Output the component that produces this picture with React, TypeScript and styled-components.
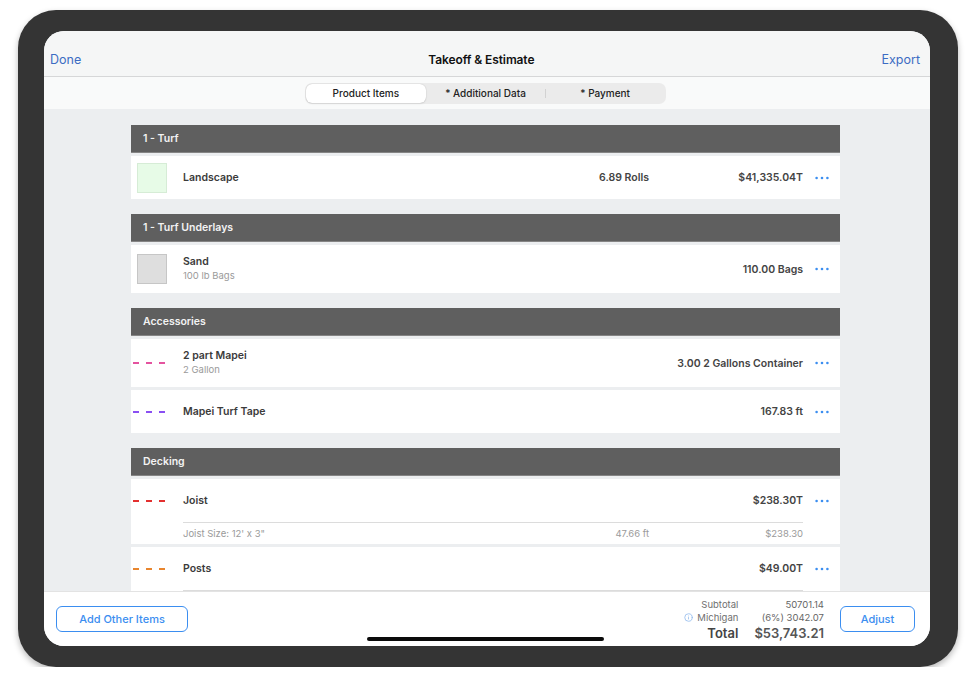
import React from 'react';
import styled, { createGlobalStyle } from 'styled-components';
import { Info } from 'lucide-react';

const GlobalStyle = createGlobalStyle`
  html, body {
    margin: 0;
    padding: 0;
    background: #ffffff;
    font-family: Inter, "Noto Sans", Roboto, sans-serif;
    -webkit-font-smoothing: antialiased;
  }
  * { box-sizing: border-box; }
`;

type Detail = { label: string; qty: string; price: string };
type Item = {
  name: string;
  sub?: string;
  swatch?: 'green' | 'gray';
  dash?: string;
  qty?: string;
  price: string;
  detail?: Detail;
};
type Section = { title: string; items: Item[] };

const sections: Section[] = [
  {
    title: '1 - Turf',
    items: [{ name: 'Landscape', swatch: 'green', qty: '6.89 Rolls', price: '$41,335.04T' }],
  },
  {
    title: '1 - Turf Underlays',
    items: [{ name: 'Sand', sub: '100 lb Bags', swatch: 'gray', price: '110.00 Bags' }],
  },
  {
    title: 'Accessories',
    items: [
      { name: '2 part Mapei', sub: '2 Gallon', dash: '#e4539f', price: '3.00 2 Gallons Container' },
      { name: 'Mapei Turf Tape', dash: '#8a4ff2', price: '167.83 ft' },
    ],
  },
  {
    title: 'Decking',
    items: [
      {
        name: 'Joist',
        dash: '#e3302f',
        price: '$238.30T',
        detail: { label: 'Joist Size: 12\' x 3"', qty: '47.66 ft', price: '$238.30' },
      },
      {
        // the size line of this row sits under the bottom bar
        name: 'Posts',
        dash: '#e8852e',
        price: '$49.00T',
        detail: { label: '', qty: '', price: '' },
      },
    ],
  },
];

const Page = styled.div`
  padding: 10px 0 0 18px;
`;

const Device = styled.div`
  width: 940px;
  height: 657px;
  padding: 21px 28px 21px 26px;
  background: #343434;
  border-radius: 38px;
  box-shadow: 0 3px 6px rgba(0, 0, 0, 0.28);
`;

const Screen = styled.div`
  position: relative;
  width: 886px;
  height: 615px;
  border-radius: 20px;
  overflow: hidden;
  display: flex;
  flex-direction: column;
  background: #eceef0;
`;

const NavBar = styled.div`
  height: 46px;
  flex-shrink: 0;
  display: flex;
  align-items: center;
  justify-content: space-between;
  padding: 11px 10px 0 6px;
  background: #f5f6f6;
  border-bottom: 1px solid #d6d7d8;
`;

const NavButton = styled.span`
  font-size: 12.5px;
  color: #3c6cc3;
`;

const Title = styled.span`
  font-size: 12px;
  font-weight: 600;
  color: #111;
  letter-spacing: -0.1px;
`;

const SegmentBar = styled.div`
  height: 32px;
  flex-shrink: 0;
  display: flex;
  align-items: center;
  justify-content: center;
  padding-right: 3px;
  background: #f9fafa;
`;

const Segmented = styled.div`
  width: 361px;
  height: 21px;
  padding: 1px;
  display: grid;
  grid-template-columns: repeat(3, 1fr);
  background: #ebebeb;
  border-radius: 7px;
`;

const Segment = styled.div<{ $active?: boolean; $divider?: boolean }>`
  position: relative;
  display: flex;
  align-items: center;
  justify-content: center;
  font-size: 10px;
  font-weight: 500;
  color: #222;
  border-radius: 6px;
  background: ${(p) => (p.$active ? '#ffffff' : 'transparent')};
  box-shadow: ${(p) => (p.$active ? '0 0 1px rgba(0,0,0,0.25), 0 1px 2px rgba(0,0,0,0.08)' : 'none')};
  &::before {
    content: '';
    display: ${(p) => (p.$divider ? 'block' : 'none')};
    position: absolute;
    left: 0;
    top: 5px;
    bottom: 5px;
    width: 1px;
    background: #d2d2d2;
  }
`;

const Content = styled.div`
  flex: 1;
  overflow: hidden;
  padding: 16px 0 0 87px;
`;

const List = styled.div`
  width: 709px;
`;

const SectionBlock = styled.div`
  margin-bottom: 15px;
`;

const SectionHeader = styled.div`
  height: 28px;
  display: flex;
  align-items: center;
  padding-left: 12px;
  background: #5f5f5f;
  border-bottom: 1px solid #858585;
  color: #f3f3f3;
  font-size: 10.5px;
  font-weight: 600;
`;

const Row = styled.div`
  margin-top: 3px;
  background: #ffffff;
`;

const Top = styled.div`
  min-height: 43px;
  display: flex;
  align-items: center;
  padding-right: 11px;
`;

const Leading = styled.div`
  width: 52px;
  flex-shrink: 0;
  display: flex;
  align-items: center;
`;

const Swatch = styled.div<{ $kind: 'green' | 'gray' }>`
  width: 30px;
  height: 30px;
  margin-left: 6px;
  background: ${(p) => (p.$kind === 'green' ? '#e7fbe7' : '#dedede')};
  border: 1px solid ${(p) => (p.$kind === 'green' ? '#d6ecd6' : '#c6c6c6')};
`;

const DashSvg = styled.svg`
  margin-left: 2px;
  display: block;
`;

const NameBlock = styled.div`
  flex: 1;
  padding: 10px 0;
  line-height: 14px;
`;

const Name = styled.div`
  font-size: 10.5px;
  font-weight: 600;
  color: #3b3b3b;
`;

const Sub = styled.div`
  font-size: 9.5px;
  color: #9a9a9a;
`;

const Qty = styled.div`
  font-size: 10.5px;
  font-weight: 600;
  color: #444;
  text-align: right;
`;

const Price = styled.div`
  width: 154px;
  flex-shrink: 0;
  font-size: 10.5px;
  font-weight: 600;
  color: #444;
  text-align: right;
  white-space: nowrap;
`;

const Dots = styled.svg`
  margin-left: 12px;
  flex-shrink: 0;
  display: block;
`;

const DetailLine = styled.div`
  margin: 0 37px 0 52px;
  height: 22px;
  display: flex;
  align-items: center;
  border-top: 1px solid #dcdcdc;
  font-size: 9.5px;
  color: #9a9a9a;
`;

const DetailLabel = styled.div`
  flex: 1;
`;

const DetailPrice = styled.div`
  width: 154px;
  text-align: right;
`;

const BottomBar = styled.div`
  height: 55px;
  flex-shrink: 0;
  display: flex;
  align-items: center;
  padding: 0 15px 0 12px;
  background: #ffffff;
  border-top: 1px solid #e3e3e3;
`;

const OutlineButton = styled.div<{ $width: number }>`
  width: ${(p) => p.$width}px;
  height: 26px;
  display: flex;
  align-items: center;
  justify-content: center;
  border: 1.5px solid #3b8ef0;
  border-radius: 6px;
  color: #3b8ef0;
  font-size: 11px;
  font-weight: 500;
`;

const Spacer = styled.div`
  flex: 1;
`;

const Totals = styled.div`
  display: grid;
  grid-template-columns: auto auto;
  column-gap: 16px;
  justify-items: end;
  align-items: center;
  margin-right: 16px;
  padding-top: 3px;
`;

const TotLabel = styled.div`
  font-size: 9.5px;
  line-height: 13px;
  color: #6f6f6f;
  display: flex;
  align-items: center;
  gap: 4px;
`;

const TotValue = styled.div`
  font-size: 9.5px;
  line-height: 13px;
  color: #666;
`;

const GrandLabel = styled.div`
  font-size: 13px;
  line-height: 19px;
  font-weight: 600;
  color: #444;
`;

const GrandValue = styled.div`
  font-size: 13px;
  line-height: 19px;
  font-weight: 600;
  color: #555;
`;

const HomeIndicator = styled.div`
  position: absolute;
  left: 50%;
  bottom: 5px;
  width: 237px;
  height: 4px;
  margin-left: -120px;
  border-radius: 2px;
  background: #0a0a0a;
`;

const Dash = ({ color }: { color: string }) => (
  <DashSvg width="34" height="4" viewBox="0 0 34 4">
    <line x1="0" y1="2" x2="34" y2="2" stroke={color} strokeWidth="2" strokeDasharray="6 7" />
  </DashSvg>
);

const More = () => (
  <Dots width="14" height="4" viewBox="0 0 14 4">
    <circle cx="1.6" cy="2" r="1.3" fill="#3b8ef0" />
    <circle cx="7" cy="2" r="1.3" fill="#3b8ef0" />
    <circle cx="12.4" cy="2" r="1.3" fill="#3b8ef0" />
  </Dots>
);

const ItemRow = ({ item }: { item: Item }) => (
  <Row>
    <Top>
      <Leading>
        {item.swatch ? <Swatch $kind={item.swatch} /> : null}
        {item.dash ? <Dash color={item.dash} /> : null}
      </Leading>
      <NameBlock>
        <Name>{item.name}</Name>
        {item.sub && <Sub>{item.sub}</Sub>}
      </NameBlock>
      {item.qty && <Qty>{item.qty}</Qty>}
      <Price>{item.price}</Price>
      <More />
    </Top>
    {item.detail && (
      <DetailLine>
        <DetailLabel>{item.detail.label}</DetailLabel>
        <div>{item.detail.qty}</div>
        <DetailPrice>{item.detail.price}</DetailPrice>
      </DetailLine>
    )}
  </Row>
);

export default function App() {
  return (
    <>
      <GlobalStyle />
      <Page>
        <Device>
          <Screen>
            <NavBar>
              <NavButton>Done</NavButton>
              <Title>Takeoff &amp; Estimate</Title>
              <NavButton>Export</NavButton>
            </NavBar>
            <SegmentBar>
              <Segmented>
                <Segment $active>Product Items</Segment>
                <Segment>* Additional Data</Segment>
                <Segment $divider>* Payment</Segment>
              </Segmented>
            </SegmentBar>
            <Content>
              <List>
                {sections.map((s) => (
                  <SectionBlock key={s.title}>
                    <SectionHeader>{s.title}</SectionHeader>
                    {s.items.map((it) => (
                      <ItemRow key={it.name} item={it} />
                    ))}
                  </SectionBlock>
                ))}
              </List>
            </Content>
            <BottomBar>
              <OutlineButton $width={132}>Add Other Items</OutlineButton>
              <Spacer />
              <Totals>
                <TotLabel>Subtotal</TotLabel>
                <TotValue>50701.14</TotValue>
                <TotLabel>
                  <Info size={9} color="#8ab6ec" strokeWidth={2} />
                  Michigan
                </TotLabel>
                <TotValue>(6%) 3042.07</TotValue>
                <GrandLabel>Total</GrandLabel>
                <GrandValue>$53,743.21</GrandValue>
              </Totals>
              <OutlineButton $width={75}>Adjust</OutlineButton>
            </BottomBar>
            <HomeIndicator />
          </Screen>
        </Device>
      </Page>
    </>
  );
}
